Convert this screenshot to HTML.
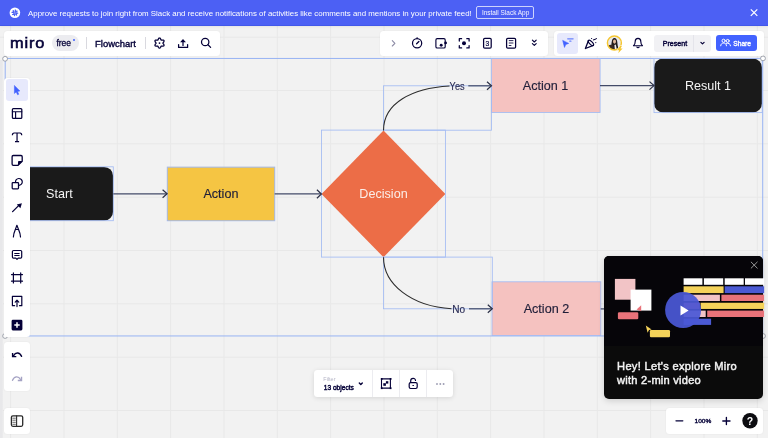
<!DOCTYPE html>
<html><head><meta charset="utf-8">
<style>
*{margin:0;padding:0;box-sizing:border-box}
html,body{width:768px;height:438px;overflow:hidden}
body{position:relative;background:#f2f2f2;font-family:"Liberation Sans",sans-serif;color:#050038}
.abs{position:absolute}
#grid{position:absolute;left:0;top:0}
.panel{position:absolute;background:#fff;border-radius:3.5px;box-shadow:0 0 2px rgba(0,0,0,0.07)}
.banner{position:absolute;left:0;top:0;width:768px;height:26px;background:#4c60f4;color:#fff;box-shadow:0 1px 2px rgba(0,0,0,0.06);border-bottom:0.6px solid #4258ea}
.btxt{position:absolute;left:27.8px;top:7.5px;font-size:8.6px;white-space:nowrap;line-height:10px}
.ibtn{position:absolute;left:476.5px;top:6.7px;width:57.3px;height:12.5px;border:1px solid rgba(255,255,255,0.75);border-radius:2px;font-size:7px;line-height:10.5px;text-align:center;white-space:nowrap}
.t{position:absolute;white-space:nowrap}
svg{position:absolute;left:0;top:0;overflow:visible;will-change:transform}
</style></head><body>

<!-- grid -->
<svg id="grid" width="768" height="438">
  <g stroke="#e8e8e8" stroke-width="1">
<line x1="10.60" y1="0" x2="10.60" y2="438"/>
<line x1="63.93" y1="0" x2="63.93" y2="438"/>
<line x1="117.27" y1="0" x2="117.27" y2="438"/>
<line x1="170.60" y1="0" x2="170.60" y2="438"/>
<line x1="223.93" y1="0" x2="223.93" y2="438"/>
<line x1="277.26" y1="0" x2="277.26" y2="438"/>
<line x1="330.60" y1="0" x2="330.60" y2="438"/>
<line x1="383.93" y1="0" x2="383.93" y2="438"/>
<line x1="437.26" y1="0" x2="437.26" y2="438"/>
<line x1="490.60" y1="0" x2="490.60" y2="438"/>
<line x1="543.93" y1="0" x2="543.93" y2="438"/>
<line x1="597.26" y1="0" x2="597.26" y2="438"/>
<line x1="650.60" y1="0" x2="650.60" y2="438"/>
<line x1="703.93" y1="0" x2="703.93" y2="438"/>
<line x1="757.26" y1="0" x2="757.26" y2="438"/>
<line x1="0" y1="37.20" x2="768" y2="37.20"/>
<line x1="0" y1="90.53" x2="768" y2="90.53"/>
<line x1="0" y1="143.87" x2="768" y2="143.87"/>
<line x1="0" y1="197.20" x2="768" y2="197.20"/>
<line x1="0" y1="250.53" x2="768" y2="250.53"/>
<line x1="0" y1="303.86" x2="768" y2="303.86"/>
<line x1="0" y1="357.20" x2="768" y2="357.20"/>
<line x1="0" y1="410.53" x2="768" y2="410.53"/>
</g>
</svg>

<div class="abs" style="left:0;top:60px;width:3px;height:378px;background:linear-gradient(90deg,#e8e8ea 0,#e8e8ea 70%,#eeeeef 100%)"></div>
<!-- diagram -->
<svg width="768" height="438">
  <!-- Start -->
  <rect x="4.5" y="166.9" width="108.6" height="53.7" rx="9" fill="#1a1a1a"/>
  <text x="59.4" y="198.2" font-size="12.6" fill="#f4f4f4" text-anchor="middle" font-family="Liberation Sans">Start</text>
  <!-- Action -->
  <rect x="167.3" y="167.2" width="107.4" height="53.5" fill="#f5c543" stroke="#c9b27e" stroke-width="0.6"/>
  <text x="220.9" y="198.1" font-size="12.6" fill="#1f1e38" stroke="#1f1e38" stroke-width="0.15" text-anchor="middle" font-family="Liberation Sans">Action</text>
  <!-- Decision -->
  <polygon points="383.5,130.4 445.4,194 383.5,257.2 321.5,194" fill="#ec6d47"/>
  <text x="383.5" y="198.1" font-size="12.6" fill="#fbeee9" text-anchor="middle" font-family="Liberation Sans">Decision</text>
  <!-- Action 1 -->
  <rect x="491.5" y="58.5" width="108.5" height="53.9" fill="#f5c2c0"/>
  <text x="545.6" y="89.9" font-size="12.6" fill="#1f1e38" stroke="#1f1e38" stroke-width="0.15" text-anchor="middle" font-family="Liberation Sans">Action 1</text>
  <!-- Result 1 -->
  <rect x="654" y="58.5" width="108" height="54" rx="9" fill="#1a1a1a"/>
  <text x="708" y="89.9" font-size="12.6" fill="#f4f4f4" text-anchor="middle" font-family="Liberation Sans">Result 1</text>
  <!-- Action 2 -->
  <rect x="492" y="281.8" width="108.7" height="53.7" fill="#f5c2c0"/>
  <text x="546.4" y="313.1" font-size="12.6" fill="#1f1e38" stroke="#1f1e38" stroke-width="0.15" text-anchor="middle" font-family="Liberation Sans">Action 2</text>

  <!-- selection outlines -->
  <g stroke="#98b3f3" stroke-width="1" fill="none">
    <rect x="5.2" y="58.45" width="757.5" height="277.5"/>
  </g>
  <g stroke="#a3bbf3" stroke-width="0.85" fill="none">
    <rect x="4.5" y="166.8" width="108.8" height="53.9"/>
    <rect x="167.2" y="167.1" width="107.6" height="53.7"/>
    <rect x="321.5" y="130.1" width="123.9" height="127"/>
    <rect x="383.5" y="85.8" width="108" height="44.4"/>
    <rect x="383.5" y="257.1" width="108.8" height="51.7"/>
    <rect x="491.4" y="58.4" width="108.7" height="54.1"/>
    <rect x="654" y="58.4" width="108.2" height="54.2"/>
    <rect x="492" y="281.8" width="108.8" height="53.8"/>
  </g>
  <!-- connectors -->
  <g stroke="#434b68" stroke-width="1.2" fill="none">
    <line x1="113.3" y1="193.8" x2="166.5" y2="193.8"/>
    <line x1="274.7" y1="193.8" x2="320.8" y2="193.8"/>
    <line x1="468.3" y1="85.8" x2="490.8" y2="85.8"/>
    <line x1="600" y1="85.6" x2="653.3" y2="85.6"/>
    <line x1="469" y1="308.8" x2="491.5" y2="308.8"/>
    <line x1="600.7" y1="308.9" x2="606" y2="308.9"/>
  </g>
  <g stroke="#2a2f45" stroke-width="1.2" fill="none" stroke-linejoin="miter">
    <polyline points="162.6,189.8 167.1,193.8 162.6,197.8"/>
    <polyline points="316.9,189.8 321.4,194 316.9,198.2"/>
    <polyline points="487,81.8 491.5,85.8 487,89.8"/>
    <polyline points="649.5,81.6 654,85.6 649.5,89.6"/>
    <polyline points="487.8,304.8 492.3,308.8 487.8,312.8"/>
  </g>
  <g stroke="#2d2d2d" stroke-width="1.1" fill="none">
    <path d="M383.5,130.4 C383.5,103 412,88.2 449.5,86"/>
    <path d="M383.5,257.2 C383.5,284.5 412,306.6 451.5,308.7"/>
  </g>
  <text x="449.6" y="89.8" font-size="10.3" fill="#2a2c55" stroke="#2a2c55" stroke-width="0.15" font-family="Liberation Sans" textLength="15" lengthAdjust="spacingAndGlyphs">Yes</text>
  <text x="452.3" y="312.7" font-size="10.3" fill="#2a2c55" stroke="#2a2c55" stroke-width="0.15" font-family="Liberation Sans" textLength="12.9" lengthAdjust="spacingAndGlyphs">No</text>

  <g stroke="#8a8f9a" stroke-width="0.8" fill="#fff">
    <circle cx="5.1" cy="58.8" r="2.4"/>
    <circle cx="763" cy="58.4" r="2.4"/>
    <circle cx="5.1" cy="336" r="2.4"/>
    <circle cx="763" cy="336" r="2.4"/>
  </g>
</svg>

<!-- banner -->
<div class="banner">
  <svg width="30" height="26"><circle cx="14.9" cy="12.8" r="5.3" fill="#fff"/>
    <g transform="translate(14.9 12.8) rotate(-15) scale(1.05)" stroke="#4c60f4" stroke-width="1.2" stroke-linecap="round" fill="none">
      <path d="M-1,-2.5 V2.5 M1,-2.5 V2.5 M-2.5,-1 H2.5 M-2.5,1 H2.5"/>
    </g></svg>
  
  
  <svg width="768" height="26"><g stroke="#fff" stroke-width="1.2"><line x1="750.8" y1="9.4" x2="757.3" y2="15.9"/><line x1="757.3" y1="9.4" x2="750.8" y2="15.9"/></g></svg>
<div class="abs" style="left:476.3px;top:6.4px;width:57.4px;height:12.6px;border:1px solid rgba(255,255,255,0.72);border-radius:2px"></div>
</div>

<!-- top-left panel -->
<div class="panel" style="left:4px;top:30.5px;width:216px;height:25px"></div>

<div class="abs" style="left:51.5px;top:34.7px;width:27.5px;height:16.8px;border-radius:8.4px;background:#ececf0"></div>

<div class="abs" style="left:73.4px;top:39px;width:1.6px;height:1.6px;border-radius:1px;background:#4262ff"></div>
<div class="abs" style="left:86px;top:37px;width:0.7px;height:12.3px;background:#d9d9df"></div>

<div class="abs" style="left:145.3px;top:37px;width:0.7px;height:12.3px;background:#d9d9df"></div>

<!-- top-right panels -->
<div class="panel" style="left:380.2px;top:30.5px;width:167.9px;height:25px"></div>
<div class="panel" style="left:553.6px;top:30.5px;width:210.1px;height:25px"></div>
<div class="abs" style="left:556.5px;top:32.6px;width:21.2px;height:21px;border-radius:3px;background:#e7e9fc"></div>
<div class="abs" style="left:654.3px;top:35px;width:56.4px;height:16.5px;border-radius:3px;background:#f1f1f4"></div>
<div class="abs" style="left:693.2px;top:35px;width:0.8px;height:16.5px;background:#e4e4ea"></div>

<div class="abs" style="left:715.8px;top:34.8px;width:41.3px;height:16.7px;border-radius:3px;background:#4262ff"></div>


<!-- left toolbars -->
<div class="panel" style="left:4px;top:77.6px;width:26px;height:259.9px"></div>
<div class="abs" style="left:6.2px;top:79.3px;width:21.8px;height:21.6px;border-radius:3px;background:#e7e9fc"></div>
<div class="panel" style="left:4px;top:342.2px;width:26px;height:48.8px"></div>
<div class="panel" style="left:4px;top:408.2px;width:26px;height:25.5px"></div>

<!-- filter panel -->
<div class="panel" style="left:314.4px;top:370.3px;width:139.1px;height:26.7px;box-shadow:0 1px 5px rgba(0,0,0,0.12)"></div>
<div class="abs" style="left:372px;top:370.3px;width:0.7px;height:26.7px;background:#ececf0"></div>
<div class="abs" style="left:399.05px;top:370.3px;width:0.7px;height:26.7px;background:#ececf0"></div>
<div class="abs" style="left:426.2px;top:370.3px;width:0.7px;height:26.7px;background:#ececf0"></div>



<!-- zoom panel -->
<div class="panel" style="left:665.6px;top:408.2px;width:97.9px;height:25.4px"></div>


<!-- video popup -->
<div class="abs" style="left:603.9px;top:255.9px;width:159.5px;height:143.1px;border-radius:5px;background:#0b0b0b;overflow:hidden;box-shadow:0 2px 6px rgba(0,0,0,0.15)">
  <div class="abs" style="left:0;top:0;width:161px;height:90.5px;background:#060509"></div>
</div>
<svg width="768" height="438">
 <defs><clipPath id="pc"><rect x="603.9" y="255.9" width="160.3" height="143.1" rx="5"/></clipPath></defs>
 <g clip-path="url(#pc)">
  <path d="M750.9,261.8 L757.5,268.4 M757.5,261.8 L750.9,268.4" stroke="#9a9a9a" stroke-width="1" />
  <rect x="614.9" y="278.9" width="20.5" height="20.8" fill="#f2c4c6"/>
  <rect x="630.6" y="289.6" width="20.8" height="21" fill="#ffffff"/>
  <path d="M641.2,305.2 L636.6,309.6 L641.2,311.3 Z" fill="#e8737a"/>
  <rect x="617.9" y="312.2" width="20.4" height="7" rx="1.2" fill="#e8737a"/>
  <path d="M645.8,325.6 L651.6,329.4 L649,330.1 L647.6,332.8 Z" fill="#f5d35a"/>
  <rect x="649.9" y="330.1" width="20.1" height="7.2" rx="1.2" fill="#f5d35a"/>
  <g>
   <rect x="683.6" y="278.3" width="18.8" height="6.5" fill="#fff"/>
   <rect x="703.9" y="278.3" width="19.3" height="6.5" fill="#fff"/>
   <rect x="724.7" y="278.3" width="19" height="6.5" fill="#fff"/>
   <rect x="745" y="278.3" width="20" height="6.5" fill="#fff"/>
   <rect x="683.6" y="286.3" width="40" height="6.8" fill="#f5d35a"/>
   <rect x="724.7" y="286.3" width="40" height="6.8" fill="#4b5ad4"/>
   <rect x="683.6" y="294.7" width="36.3" height="6.3" fill="#f2c4c6"/>
   <rect x="721.4" y="294.7" width="43" height="6.3" fill="#e8737a"/>
   <rect x="683.6" y="302.75" width="16" height="6.2" fill="#e8737a"/>
   <rect x="700.6" y="302.75" width="64" height="6.2" fill="#f5d35a"/>
   <rect x="683.6" y="310.6" width="22.1" height="6.4" fill="#f2c4c6"/>
   <rect x="707.2" y="310.6" width="57" height="6.4" fill="#e8737a"/>
   <rect x="683.6" y="318.7" width="27.5" height="6.2" fill="#4b5ad4"/>
  </g>
  <circle cx="683.1" cy="310" r="18" fill="#4a58d6" fill-opacity="0.93"/>
  <path d="M680.5,305.6 L688.6,310.5 L680.5,315.4 Z" fill="#fff"/>
 </g>
</svg>


<!-- icons overlay -->
<svg width="768" height="438" id="icons">
 <g fill="none" stroke="#050038" stroke-width="1.25" stroke-linecap="round" stroke-linejoin="round">
  <!-- gear -->
  <path d="M162.9,43.1 L163.2,43.6 L163.7,44.2 L164.0,45.0 L164.0,45.7 L163.4,46.1 L162.5,46.1 L161.8,46.0 L161.2,46.1 L160.9,46.5 L160.6,47.3 L160.1,48.0 L159.5,48.2 L158.9,48.0 L158.4,47.3 L158.1,46.5 L157.8,46.1 L157.2,46.0 L156.5,46.1 L155.6,46.1 L155.0,45.7 L155.0,45.0 L155.3,44.2 L155.8,43.6 L156.1,43.1 L155.8,42.6 L155.3,42.0 L155.0,41.2 L155.0,40.5 L155.6,40.1 L156.5,40.1 L157.2,40.2 L157.8,40.1 L158.1,39.7 L158.4,38.9 L158.9,38.2 L159.5,38.0 L160.1,38.2 L160.6,38.9 L160.9,39.7 L161.2,40.1 L161.8,40.2 L162.5,40.1 L163.4,40.1 L164.0,40.5 L164.0,41.2 L163.7,42.0 L163.2,42.6Z"/>
  <!-- upload -->
  <path d="M183,41.5 V45.4"/>
  <path d="M178.6,44.6 V47.4 H187.6 V44.6"/>
  <!-- search -->
  <circle cx="205.2" cy="42" r="3.7"/>
  <path d="M208,44.8 L210.6,47.4"/>
  <!-- timer -->
  <circle cx="417.1" cy="43.3" r="4.6"/>
  <path d="M417.1,37.6 V38.2" stroke-width="1"/>
  <path d="M416.6,43.8 L418.9,41.5" stroke-width="1.3"/>
  <!-- frame icon -->
  <rect x="435.9" y="38.6" width="9.3" height="9.4" rx="1.3" stroke-width="1.15"/>
  <!-- focus -->
  <path d="M459.3,41 V38.7 H461.6 M466.8,38.7 H469.1 V41 M469.1,45.6 V47.9 H466.8 M461.6,47.9 H459.3 V45.6"/>
  <!-- vote -->
  <rect x="483.6" y="38.4" width="7.6" height="9.8" rx="1.2"/>
  <!-- notes -->
  <rect x="506.6" y="38.4" width="9" height="9.8" rx="1.2"/>
  <path d="M508.8,40.6 H513.4 M508.8,43 H513.4 M508.8,45.5 H511.4" stroke-width="0.85" stroke-linecap="butt"/>
  <!-- double chevron -->
  <path d="M532.4,40.2 L534.3,42 L536.2,40.2 M532.4,43.6 L534.3,45.4 L536.2,43.6" stroke-width="1.15"/>
  <!-- party popper -->
  <path d="M585.4,48.5 L588.5,40.5 M585.4,48.5 L593.4,45.3" stroke-width="1.3"/>
  <ellipse cx="590.9" cy="42.9" rx="3.5" ry="1.5" transform="rotate(45 590.9 42.9)" stroke-width="1.15"/>
  <path d="M593.4,39.9 C594.4,39.3 595.4,39.6 596.4,38.5" stroke-width="1.1"/>
  <!-- bell -->
  <path d="M633.5,45.7 C634.8,44.7 635.2,43.6 635.2,41.4 C635.2,39.3 636.4,38.3 638,38.3 C639.6,38.3 640.8,39.3 640.8,41.4 C640.8,43.6 641.2,44.7 642.5,45.7 Z" stroke-width="1.15"/>
  <path d="M636.9,47 C637.3,48 638.7,48 639.1,47" stroke-width="1.2"/>
  <!-- present chevron -->
  <path d="M700.9,42.3 L702.5,43.9 L704.1,42.3" stroke-width="1.2"/>
  <!-- left toolbar -->
  <rect x="12.4" y="108.5" width="9.4" height="9.9" rx="1" stroke-width="1.25"/>
  <path d="M12.4,111.7 H21.8 M15.6,111.7 V118.4" stroke-width="1.15"/>
  <path d="M12.4,135.2 C12.4,133.6 12.9,133 14.1,133 H20 C21.2,133 21.7,133.6 21.7,135.2 M17.05,133 V141.6 M15,141.6 H19.1" stroke-width="1.2" stroke-linecap="butt" stroke-linejoin="miter"/>
  <path d="M18,165.3 H13.3 C12.5,165.3 12.1,164.9 12.1,164.1 V156.7 C12.1,155.9 12.5,155.5 13.3,155.5 H21 C21.8,155.5 22.2,155.9 22.2,156.7 V161.3 Z" stroke-width="1.3"/>
  <path d="M15.51,182.3 A3.4,3.4 0 1 1 18.6,185.29" stroke-width="1.2"/>
  <rect x="12.2" y="182.5" width="6.3" height="6.3" rx="0.7" stroke-width="1.25"/>
  <path d="M12.6,211.6 L19.6,204.6" stroke-width="1.3"/>
  <path d="M13.4,236.9 C13.4,234 14.5,231.5 15.4,229.4 L16.9,225.3 L18.5,229.4 C19.4,231.5 20.5,234 20.5,236.9 M15.4,229.5 H18.5" stroke-width="1.2"/>
  <path d="M13.5,250.5 H20.6 C21.3,250.5 21.7,250.9 21.7,251.6 V257.1 C21.7,257.8 21.3,258.2 20.6,258.2 H18.2 L17,259.4 L15.8,258.2 H13.5 C12.8,258.2 12.4,257.8 12.4,257.1 V251.6 C12.4,250.9 12.8,250.5 13.5,250.5 Z" stroke-width="1.2"/>
  <path d="M14.7,253.5 H19.2 M14.7,255.5 H19.2" stroke-width="1"/>
  <path d="M11.5,274.6 H22.5 M11.5,281.2 H22.5 M13.4,272.9 V283 M20.7,272.9 V283" stroke-width="1.2"/>
  <path d="M14.6,305.7 H12.4 V296.4 H21.8 V305.7 H19.5" stroke-width="1.2"/>
  <path d="M17,306.6 V300.4 M15.2,302.1 L17,300.2 L18.8,302.1" stroke-width="1.2"/>
  <path d="M13.6,355.6 C15.6,351.9 19.6,352 21.6,356.4" stroke-width="1.35"/><path d="M12.6,352.9 V356.6 H16.3" stroke-width="1.4" stroke-linecap="butt" stroke-linejoin="miter"/>
  <path d="M20.5,379.5 C18.5,375.8 14.5,375.9 12.5,380.3" stroke="#a5a3c4" stroke-width="1.35"/><path d="M21.5,376.8 V380.5 H17.8" stroke="#a5a3c4" stroke-width="1.4" stroke-linecap="butt" stroke-linejoin="miter"/>
  <!-- bottom-left -->
  <rect x="11.4" y="415.8" width="11.3" height="10.5" rx="1.5" stroke="#2a2a2a" stroke-width="1.3"/>
  <path d="M16.6,415.8 V426.3" stroke="#2a2a2a" stroke-width="1.1"/>
  <!-- filter panel -->
  <path d="M359.3,382.9 L360.8,384.5 L362.3,382.9" stroke-width="1.4"/>
  <rect x="381.5" y="378.9" width="8.9" height="9.2" stroke-width="1.1"/>
  <rect x="409.2" y="382.6" width="8" height="5.9" rx="1.4" stroke-width="1.2"/>
  <path d="M410.7,382.4 V380.8 C410.7,377.6 415.5,377.6 415.5,380.5" stroke-width="1.2"/>
  <!-- zoom -->
  <path d="M676,420.8 H682.8 M722.8,421 H730 M726.4,417.4 V424.6" stroke-width="1.35"/>
 </g>
 <g fill="#050038" stroke="none">
  <circle cx="159.5" cy="43.1" r="0.9"/>
  <path d="M180.1,42.2 L183,38.9 L185.9,42.2 Z"/>
  <circle cx="441.2" cy="45.3" r="1.45"/><circle cx="445.6" cy="42.9" r="1.4"/>
  <circle cx="464" cy="43.2" r="2"/>
  <text x="487.4" y="46" font-size="6.6" text-anchor="middle" font-family="Liberation Sans" stroke="#050038" stroke-width="0.2">3</text>
  <circle cx="591.6" cy="38.5" r="0.6"/><circle cx="595.8" cy="42.6" r="0.6"/>
  
  <path d="M22.5,161.1 L18,165.8 V162.3 C18,161.6 18.4,161.1 19.1,161.1 Z"/>
  <path d="M21.9,203.2 L16.8,204.6 L20.4,208.2 Z"/>
  <rect x="11.6" y="319.7" width="10.8" height="10.7" rx="1.3"/>
  
  <circle cx="17.3" cy="385.5" r="0" />
  <rect x="380.8" y="378" width="1.8" height="1.8"/><rect x="389.7" y="378" width="1.8" height="1.8"/>
  <rect x="380.8" y="387.3" width="1.8" height="1.8"/><rect x="389.7" y="387.3" width="1.8" height="1.8"/>
  <rect x="383.3" y="383.2" width="2.6" height="2.6"/>
  <rect x="412.4" y="385" width="1.6" height="0.9"/>
  <circle cx="750" cy="420.8" r="7.7" fill="#0c0c10"/>
 </g>
 <!-- redo head -->
 
 <!-- notes extra, group inner outline -->
 <rect x="385.9" y="381.2" width="2.4" height="2.4" fill="#050038"/>
 <!-- plus in square -->
 <path d="M14.3,325 H19.7 M17,322.3 V327.7" stroke="#fff" stroke-width="1.5"/>
 <!-- bottom-left lines -->
 <path d="M12.4,418.2 H15.8 M12.4,420.2 H15.8 M12.4,422.3 H15.8 M12.4,424.3 H15.8" stroke="#3a3a3a" stroke-width="0.75"/>
 <!-- more dots -->
 <g fill="#9d9db3"><circle cx="437" cy="384" r="0.95"/><circle cx="440.3" cy="384" r="0.95"/><circle cx="443.6" cy="384" r="0.95"/></g>
 <!-- chevron > -->
 <path d="M392.3,40.6 L394.9,43.3 L392.3,46" fill="none" stroke="#8d8ca6" stroke-width="1.1" stroke-linecap="round" stroke-linejoin="round"/>
 <!-- help ? -->
 <text x="750" y="424.6" font-size="10.5" font-weight="bold" fill="#fff" text-anchor="middle" font-family="Liberation Sans">?</text>
 <!-- blue cursors -->
 <path d="M562.7,40.4 L568.7,43.4 L565.7,44.4 L564.5,47.4 Z" fill="#4262ff" stroke="#4262ff" stroke-width="0.6" stroke-linejoin="round"/>
 <path d="M567.7,38.8 H573.1 M569.8,41.2 H570.9" stroke="#6a82fb" stroke-width="1.25" stroke-linecap="round"/>
 <path d="M14.4,85.4 V93.5 L16.2,91.9 L17.6,94.8 L18.8,94.2 L17.5,91.5 L19.9,91 Z" fill="#4262ff" stroke="#4262ff" stroke-width="0.5" stroke-linejoin="round"/>
 <!-- share people icon -->
 <g fill="none" stroke="#fff" stroke-width="1" stroke-linecap="round">
  <circle cx="723.6" cy="40.8" r="1.6"/>
  <circle cx="727.7" cy="40.9" r="1.5"/>
  <path d="M720.7,45.8 C720.7,43.9 722.1,43.1 723.6,43.1 C725.1,43.1 726.5,43.9 726.5,45.8"/>
  <path d="M726.3,43.3 C728.4,42.9 730.5,43.6 730.5,45.8"/>
 </g>
 <!-- avatar -->
 <circle cx="614.4" cy="43" r="6.3" fill="#e6e6ec"/>
 <path d="M611.6,49 C611.2,45 611.4,38.6 614,38.1 C616.8,37.7 617.3,41 617.5,44 C617.7,46.4 618.3,47.6 618.6,48.4 C616.6,49.8 613.4,50 611.6,49 Z" fill="#221c1c"/>
 <path d="M608.4,45.8 C609.6,44.6 611.8,44.4 613,45 L614.4,49.6 C611.8,49.8 609.6,48.4 608.4,45.8 Z" fill="#3a2a24"/>
 <ellipse cx="614.5" cy="41.6" rx="1.5" ry="2.1" fill="#dfb89c"/>
 <path d="M614.4,45 L615.8,44.6 L616.8,49.3 L614.8,49.6 Z" fill="#f0eeee"/>
 <circle cx="614.4" cy="43" r="6.95" fill="none" stroke="#f5c630" stroke-width="1.5"/>
 <path d="M620,46 L617,50.3 L619.1,50.3 L618.2,53.2 L622.6,48.5 L620.5,48.5 L621.9,46 Z" fill="#f5c630" stroke="#fff" stroke-width="1" stroke-linejoin="round" paint-order="stroke"/>
</svg>

<!-- texts -->
<svg width="768" height="438" font-family="Liberation Sans">
 <text x="28" y="15.7" font-size="7.85" fill="#fff" textLength="443.8" lengthAdjust="spacingAndGlyphs">Approve requests to join right from Slack and receive notifications of activities like comments and mentions in your private feed!</text>
 <text x="481.9" y="15.1" font-size="6.45" fill="#f4f5ff" textLength="47.4" lengthAdjust="spacingAndGlyphs">Install Slack App</text>
 <text x="0" y="47.6" font-size="14.6" fill="#050038" stroke="#050038" stroke-width="0.55" textLength="30.6" lengthAdjust="spacing" transform="translate(10 0) scale(1.12 1)">miro</text>
 <text x="56.4" y="45.8" font-size="9.2" fill="#050038" stroke="#050038" stroke-width="0.3" textLength="14.6" lengthAdjust="spacingAndGlyphs">free</text>
 <text x="95.1" y="46.7" font-size="9.7" fill="#050038" stroke="#050038" stroke-width="0.38" textLength="40.9" lengthAdjust="spacingAndGlyphs">Flowchart</text>
 <text x="662.8" y="46" font-size="7.1" fill="#050038" stroke="#050038" stroke-width="0.4" textLength="24.3" lengthAdjust="spacingAndGlyphs">Present</text>
 <text x="733.2" y="46" font-size="7.1" fill="#fff" stroke="#fff" stroke-width="0.35" textLength="17.9" lengthAdjust="spacingAndGlyphs">Share</text>
 <text x="323.3" y="381.1" font-size="5.1" fill="#b4b4c6" textLength="12.2" lengthAdjust="spacingAndGlyphs">Filter</text>
 <text x="323.75" y="389.7" font-size="6.6" fill="#050038" stroke="#050038" stroke-width="0.4" textLength="30.1" lengthAdjust="spacingAndGlyphs">13 objects</text>
 <text x="694.5" y="423.4" font-size="6.2" fill="#050038" stroke="#050038" stroke-width="0.35" textLength="16.7" lengthAdjust="spacingAndGlyphs">100%</text>
 <text x="617.1" y="370.4" font-size="11.1" fill="#f4f4f4" stroke="#f4f4f4" stroke-width="0.45" textLength="119.6" lengthAdjust="spacing">Hey! Let's explore Miro</text>
 <text x="617.1" y="383.9" font-size="11.1" fill="#f4f4f4" stroke="#f4f4f4" stroke-width="0.45" textLength="83.6" lengthAdjust="spacing">with 2-min video</text>
</svg>

</body></html>
